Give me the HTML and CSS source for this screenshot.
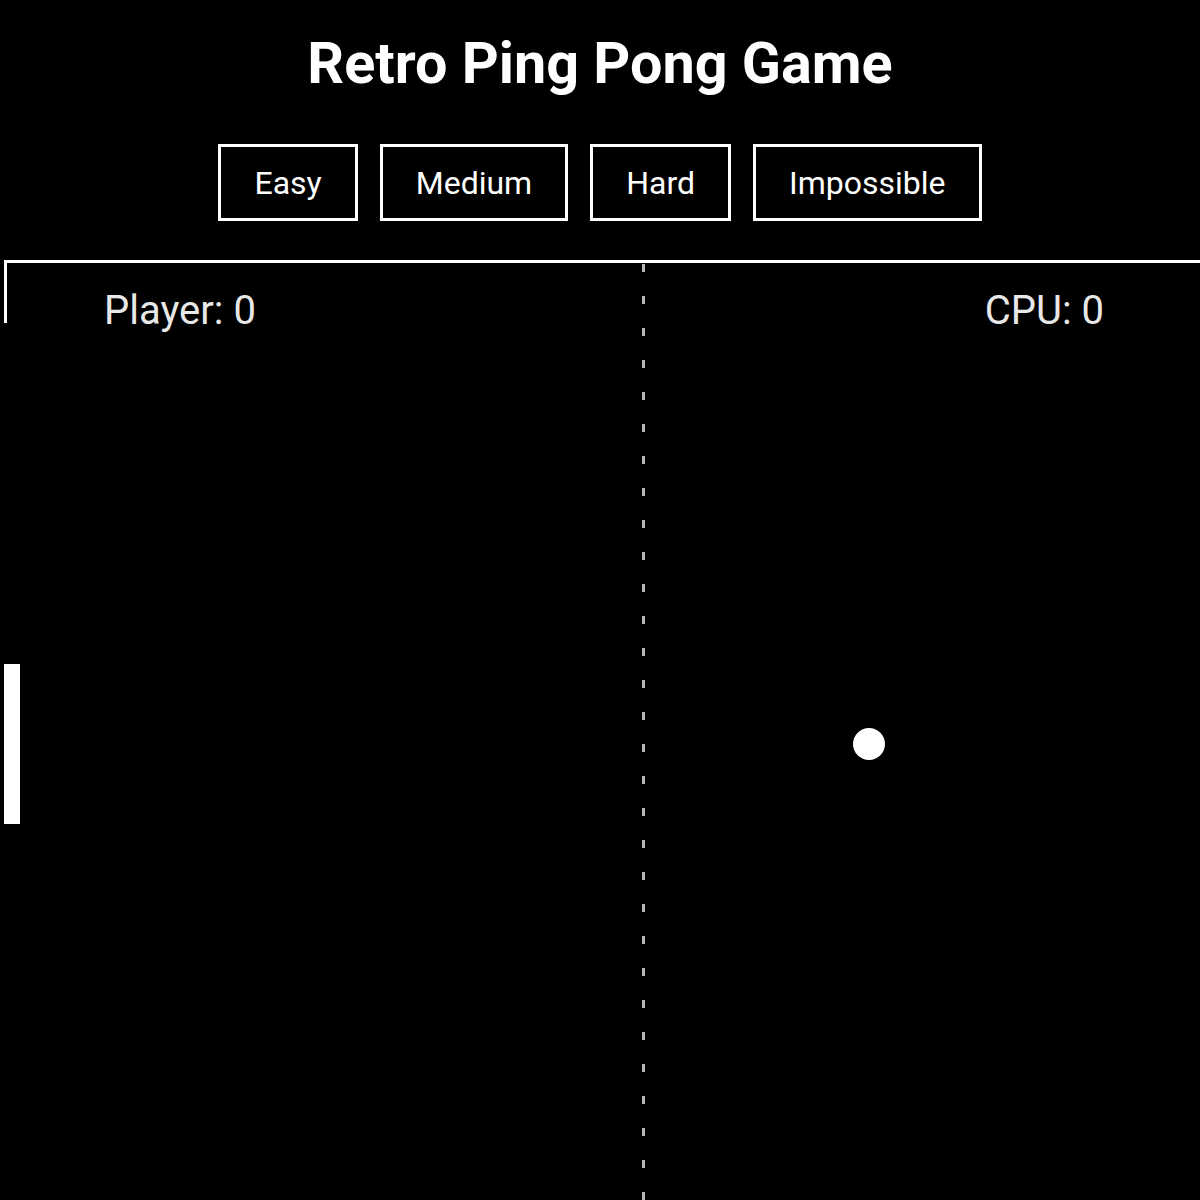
FILE: index.html
```html
<!DOCTYPE html>
<html lang="en">
<head>
<meta charset="utf-8">
<title>Retro Ping Pong Game</title>
<link rel="stylesheet" href="styles.css">
</head>
<body>
<header class="top">
  <h1 class="title">Retro Ping Pong Game</h1>
  <div class="levels">
    <button class="level">Easy</button>
    <button class="level">Medium</button>
    <button class="level">Hard</button>
    <button class="level">Impossible</button>
  </div>
</header>
<main class="arena">
  <div class="edge"></div>
  <div class="net"></div>
  <div class="scores">
    <span class="score">Player: 0</span>
    <span class="score">CPU: 0</span>
  </div>
  <div class="paddle"></div>
  <div class="ball"></div>
</main>
</body>
</html>
```
FILE: styles.css
```css
html, body {
  margin: 0;
  padding: 0;
  background: #000;
  color: #fff;
  overflow: hidden;
  height: 1200px;
}

.top {
  display: flex;
  flex-direction: column;
  align-items: center;
}

.title {
  margin: 32px 0 0;
  font-family: Roboto, "Liberation Sans", sans-serif;
  font-weight: 700;
  font-size: 57.5px;
  line-height: 64px;
  color: #fff;
}

.levels {
  display: flex;
  gap: 22px;
  margin-top: 48px;
}

.level {
  height: 77px;
  padding: 0 33px;
  background: #000;
  color: #fff;
  border: 3px solid #fff;
  font-family: Roboto, "Liberation Sans", sans-serif;
  font-size: 32px;
  font-weight: 400;
  display: flex;
  align-items: center;
  cursor: pointer;
}

.arena {
  position: relative;
  margin: 39px 0 0 4px;
  border-top: 3px solid #fff;
  height: 1000px;
  background: #000;
}

.edge {
  position: absolute;
  left: 0;
  top: 0;
  width: 3px;
  height: 60px;
  background: #fff;
}

.net {
  position: absolute;
  left: 638px;
  top: 1px;
  width: 3px;
  height: 1000px;
  background: repeating-linear-gradient(to bottom, #b4b4b4 0, #b4b4b4 8px, transparent 8px, transparent 32px);
}

.scores {
  display: flex;
  justify-content: space-between;
  padding: 28px 96px 0 100px;
}

.score {
  font-family: Roboto, "Liberation Sans", sans-serif;
  font-size: 40px;
  line-height: 40px;
  color: #e8e8e8;
}

.paddle {
  position: absolute;
  left: 0;
  top: 401px;
  width: 16px;
  height: 160px;
  background: #fff;
}

.ball {
  position: absolute;
  left: 849px;
  top: 465px;
  width: 32px;
  height: 32px;
  border-radius: 50%;
  background: #fff;
}
```
